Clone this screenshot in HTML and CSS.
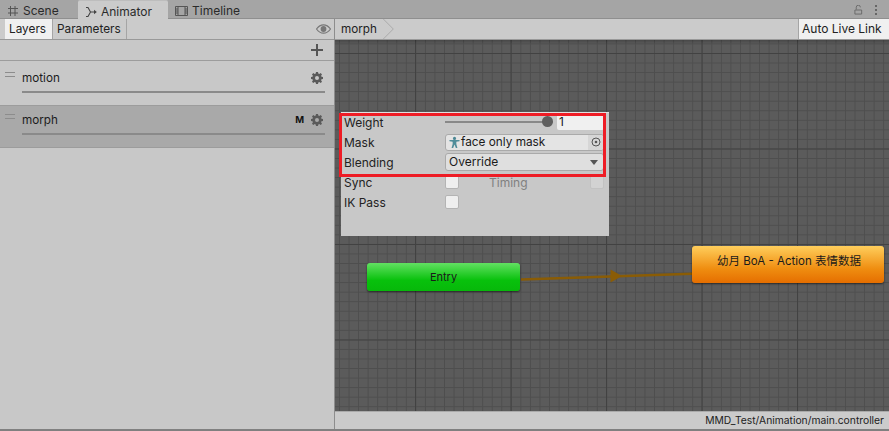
FILE: index.html
```html
<!DOCTYPE html>
<html lang="en">
<head>
<meta charset="utf-8">
<title>Animator</title>
<link rel="stylesheet" href="styles.css">
</head>
<body>
<div class="window">
  <header class="tabbar">
    <div class="tab">
      <svg class="tab-icon" viewBox="0 0 12 12"><path d="M3.500 1v10M8 1v10M1 3.500h10M1 8h10" fill="none" stroke="#555" stroke-width="1"/></svg>
      <span>Scene</span>
    </div>
    <div class="tab tab-active">
      <svg class="tab-icon" viewBox="0 0 12 12"><path d="M1 1.500h2l2.500 4.500L3 10.500H1M5.500 6H10" fill="none" stroke="#444" stroke-width="1.100"/><path d="M9 3.800 11.800 6 9 8.200z" fill="#444"/></svg>
      <span>Animator</span>
    </div>
    <div class="tab">
      <svg class="tab-icon tab-icon-wide" viewBox="0 0 13 12"><path d="M.5 1.500h12v9H.5zM3 1.500v9M10 1.500v9M.5 4h2.500M.5 6h2.500M.5 8h2.500M10 4h2.500M10 6h2.500M10 8h2.500" fill="none" stroke="#555" stroke-width="1"/></svg>
      <span>Timeline</span>
    </div>
    <div class="tabbar-tools">
      <svg class="lock" viewBox="0 0 10 11"><path d="M2.500 5V2.500a2.300 2.300 0 0 1 4.600 0M1 5.500h7.500v4.500H1z" fill="none" stroke="#666" stroke-width="1"/></svg>
      <div class="kebab"><i></i><i></i><i></i></div>
    </div>
  </header>
  <div class="main">
    <aside class="side">
      <div class="side-tabs">
        <div class="side-tab side-tab-on">Layers</div>
        <div class="side-tab">Parameters</div>
        <svg class="eye" viewBox="0 0 15 10"><path d="M.5 5C3 1.500 5 .8 7.500.8S12 1.500 14.500 5C12 8.500 10 9.200 7.500 9.200S3 8.500.5 5z" fill="none" stroke="#777" stroke-width="1.200"/><circle cx="7.500" cy="5" r="2.900" fill="#777"/></svg>
      </div>
      <div class="add-row"><span class="plus"></span></div>
      <section class="layer">
        <div class="grip"></div>
        <div class="layer-body">
          <div class="layer-head">
            <span class="layer-name">motion</span>
            <svg class="gear" viewBox="0 0 12 12"><use href="#gear-shape"/></svg>
          </div>
          <div class="layer-bar"></div>
        </div>
      </section>
      <section class="layer layer-on">
        <div class="grip"></div>
        <div class="layer-body">
          <div class="layer-head">
            <span class="layer-name">morph</span>
            <span class="layer-m">M</span>
            <svg class="gear" viewBox="0 0 12 12"><use href="#gear-shape"/></svg>
          </div>
          <div class="layer-bar"></div>
        </div>
      </section>
    </aside>
    <div class="content">
      <div class="crumbs">
        <div class="crumb">morph</div>
        <svg class="crumb-tip" viewBox="0 0 12 21"><path d="M0 0 L10.500 10.500 L0 21" fill="#cbcbcb" stroke="#aaa" stroke-width="1"/></svg>
        <div class="live">Auto Live Link</div>
      </div>
      <div class="graph">
        <div class="panel">
          <div class="row"><span class="label">Weight</span>
            <div class="field">
              <div class="slider"><i></i></div>
              <div class="num">1</div>
            </div>
          </div>
          <div class="row"><span class="label">Mask</span>
            <div class="field">
              <div class="objfield">
                <svg class="figure" viewBox="0 0 12 13"><circle cx="6" cy="2" r="1.700" fill="#4b8794"/><path d="M.5 3.700h11v1.300L8 5.800V8l1.200 4.500H7.500L6 8.800 4.500 12.500H2.800L4 8V5.800L.5 5z" fill="#4f8d9a"/></svg>
                <span>face only mask</span>
                <span class="picker"><svg viewBox="0 0 10 10"><circle cx="5" cy="5" r="4" fill="none" stroke="#555" stroke-width="1"/><circle cx="5" cy="5" r="1.300" fill="#555"/></svg></span>
              </div>
            </div>
          </div>
          <div class="row"><span class="label">Blending</span>
            <div class="field">
              <div class="select"><span>Override</span><i class="caret"></i></div>
            </div>
          </div>
          <div class="row"><span class="label">Sync</span>
            <div class="field">
              <span class="check"></span>
              <span class="timing">Timing</span>
              <span class="check check-off"></span>
            </div>
          </div>
          <div class="row"><span class="label">IK Pass</span>
            <div class="field"><span class="check"></span></div>
          </div>
          <div class="redbox"></div>
        </div>
        <svg class="wire" viewBox="0 0 889 431"><path d="M521 279.500 L692 273.800" stroke="#8a5c05" stroke-width="2.400" fill="none"/><path d="M610.500 269.500 L622 276 L610.500 282.500z" fill="#8a5c05"/></svg>
        <div class="node node-entry">Entry</div>
        <div class="node node-state">幼月 BoA - Action 表情数据</div>
      </div>
      <footer class="status">MMD_Test/Animation/main.controller</footer>
    </div>
  </div>
</div>
<svg class="defs" width="0" height="0"><defs>
  <g id="gear-shape"><path fill="#5a5a5a" fill-rule="evenodd" d="M5 0h2l.3 1.600 1 .4L9.700 1.100l1.300 1.300-.9 1.400.4 1L12 5v2l-1.500.3-.4 1 .9 1.400-1.300 1.300-1.400-.9-1 .4L7 12H5l-.3-1.500-1-.4-1.400.9L1 9.700l.9-1.400-.4-1L0 7V5l1.500-.3.4-1L1 2.400l1.300-1.300 1.400.9 1-.4zM6 4a2 2 0 1 0 0 4 2 2 0 0 0 0-4z"/></g>
</defs></svg>
</body>
</html>
```

FILE: styles.css
```css
html, body { margin: 0; padding: 0; height: 100%; overflow: hidden; }
body { font-family: Inter, "Noto Sans CJK SC", sans-serif; font-size: 12px; color: #1a1a1a; background: #c8c8c8; }
.defs { position: absolute; }
.window { width: 889px; height: 431px; display: flex; flex-direction: column; border-bottom: 2px solid #808080; box-sizing: border-box; }

.tabbar { background: #a5a5a5; display: flex; align-items: stretch; flex: none; border-bottom: 1px solid #8f8f8f; height: 18px; }
.tab { display: flex; align-items: center; gap: 4px; padding: 3px 0 0 7px; width: 71px; box-sizing: border-box; color: #2a2a2a; font-size: 12px; }
.tab:first-child { width: 78px; }
.tab-active { width: 90px; background: #cbcbcb; padding-left: 7px; border-top: 1px solid #bdbdbd; border-radius: 2px 2px 0 0; margin-bottom: -1px; }
.tab-icon { width: 12px; height: 12px; flex: none; }
.tab-icon-wide { width: 13px; }
.tabbar-tools { margin-left: auto; display: flex; align-items: center; gap: 12px; padding: 1px 12px 0 0; }
.lock { width: 9px; height: 10px; }
.kebab { display: flex; flex-direction: column; gap: 2px; }
.kebab i { width: 2px; height: 2px; background: #666; display: block; }

.main { flex: 1; display: flex; min-height: 0; }
.side { width: 335px; flex: none; box-sizing: border-box; border-right: 1px solid #8d8d8d; background: #c8c8c8; display: flex; flex-direction: column; }
.side-tabs { height: 21px; flex: none; box-sizing: border-box; display: flex; align-items: stretch; border-bottom: 1px solid #999; padding-left: 5px; position: relative; background: #cbcbcb; }
.side-tab { padding: 0 5px 0 4px; line-height: 20px; border-right: 1px solid #a5a5a5; color: #222; font-size: 11.800px; }
.side-tab-on { background: #f0f0f0; padding: 0 5px 0 4px; width: 48px; box-sizing: border-box; }
.eye { width: 15px; height: 10px; margin: 5px 3px 0 auto; }

.add-row { height: 20px; flex: none; border-bottom: 1px solid #9c9c9c; display: flex; justify-content: flex-end; align-items: center; padding-right: 11px; }
.plus { width: 12px; height: 12px; background: linear-gradient(#555, #555) center / 12px 2px no-repeat, linear-gradient(#555, #555) center / 2px 12px no-repeat; }

.layer { height: 45px; box-sizing: border-box; flex: none; display: flex; border-bottom: 1px solid #9c9c9c; padding: 11px 9px 0 5px; }
.layer-on { background: #a9a9a9; height: 42px; padding-top: 8px; }
.grip { width: 10px; height: 3px; border-top: 1px solid #8c8c8c; border-bottom: 1px solid #8c8c8c; flex: none; }
.layer-body { flex: 1; margin-left: 7px; }
.layer-head { display: flex; align-items: center; height: 13px; margin-top: -1px; padding-right: 2px; }
.layer-name { font-size: 11.700px; color: #1c1c1c; margin-right: auto; }
.layer-m { font-size: 9.500px; font-weight: 700; color: #111; margin-right: 7px; }
.gear { width: 12px; height: 12px; }
.layer-bar { height: 2px; background: #8a8a8a; margin-top: 7px; }

.content { flex: 1; display: flex; flex-direction: column; min-width: 0; }
.crumbs { height: 21px; flex: none; box-sizing: border-box; display: flex; background: #cbcbcb; border-bottom: 1px solid #999; }
.crumb { padding-left: 6px; width: 48px; box-sizing: border-box; line-height: 20px; color: #222; font-size: 11.700px; }
.crumb-tip { width: 12px; height: 20px; flex: none; }
.live { margin-left: auto; background: #f0f0f0; border-left: 1px solid #a5a5a5; width: 91px; padding-left: 3px; box-sizing: border-box; line-height: 20px; color: #222; font-size: 12px; }

.graph { flex: 1; position: relative; overflow: hidden; background-color: #5b5b5b;
  background-image:
    linear-gradient(rgba(0,0,0,.22), transparent),
    linear-gradient(90deg, #424242 1px, transparent 1px),
    linear-gradient(#424242 1px, transparent 1px),
    linear-gradient(90deg, #4e4e4e 1px, transparent 1px),
    linear-gradient(#4e4e4e 1px, transparent 1px);
  background-size: 100% 4px, 95.500px 95.500px, 95.500px 95.500px, 9.550px 9.550px, 9.550px 9.550px;
  background-repeat: no-repeat, repeat, repeat, repeat, repeat;
  background-position: 0 0, 80px 0, 0 13px, 4px 0, 0 3.450px;
}
.panel { position: absolute; left: 6px; top: 72px; width: 268px; height: 124px; box-sizing: border-box; background: #c8c8c8; box-shadow: inset 0 1px 0 #e0e0e0; }
.row { height: 20px; display: flex; align-items: center; padding-left: 3px; }
.label { width: 101px; flex: none; color: #222; font-size: 12px; }
.field { flex: 1; display: flex; align-items: center; padding-right: 5px; }
.slider { width: 108px; height: 2px; background: #888; position: relative; flex: none; }
.slider i { position: absolute; right: 0; top: -5px; width: 11px; height: 11px; border-radius: 50%; background: #5f5f5f; }
.num { margin-left: 4px; flex: 1; height: 16px; line-height: 16px; background: #f0f0f0; border-radius: 2px; padding-left: 2px; font-size: 12px; }
.objfield { flex: 1; height: 17px; background: #e4e4e4; border: 1px solid #aaa; border-radius: 3px; box-sizing: border-box; display: flex; align-items: center; padding-left: 3px; gap: 1px; font-size: 11.800px; }
.figure { width: 11px; height: 13px; flex: none; }
.picker { margin-left: auto; width: 15px; height: 15px; background: #d6d6d6; display: flex; align-items: center; justify-content: center; border-radius: 0 2px 2px 0; }
.picker svg { width: 10px; height: 10px; }
.select { flex: 1; height: 18px; background: #dfdfdf; border: 1px solid #aaa; border-radius: 3px; box-sizing: border-box; display: flex; align-items: center; justify-content: space-between; padding: 0 5px 2px 3px; font-size: 12px; }
.caret { width: 0; height: 0; margin-top: 2px; border-left: 4px solid transparent; border-right: 4px solid transparent; border-top: 5px solid #555; }
.check { width: 14px; height: 14px; box-sizing: border-box; background: #efefef; border: 1px solid #b4b4b4; border-radius: 2px; flex: none; }
.check-off { background: #d2d2d2; border-color: #c2c2c2; margin-left: auto; }
.timing { color: #808080; margin-left: 30px; font-size: 12px; }
.redbox { position: absolute; left: -2px; top: 1px; width: 267px; height: 64px; box-sizing: border-box; border: 3px solid #ee1c25; }

.wire { position: absolute; left: -335px; top: -40px; width: 889px; height: 431px; }
.node { position: absolute; display: flex; align-items: center; justify-content: center; border-radius: 3px; font-size: 11px; color: #1a1a1a; box-shadow: 0 1px 2px rgba(0,0,0,.55); }
.node-entry { left: 32px; top: 223px; width: 153px; height: 28px; background: linear-gradient(#62e062, #08c10c 62%, #07b80a); }
.node-state { left: 357px; top: 206px; width: 192px; height: 37px; background: linear-gradient(#ffce5c, #ef8d10 62%, #e56e00); padding: 0 0 9px 2px; box-sizing: border-box; font-size: 11.500px; }
.status { height: 18px; flex: none; box-sizing: border-box; background: #cbcbcb; border-top: 1px solid #aaa; text-align: right; padding-right: 5px; font-size: 10.300px; line-height: 17px; color: #222; }
```
